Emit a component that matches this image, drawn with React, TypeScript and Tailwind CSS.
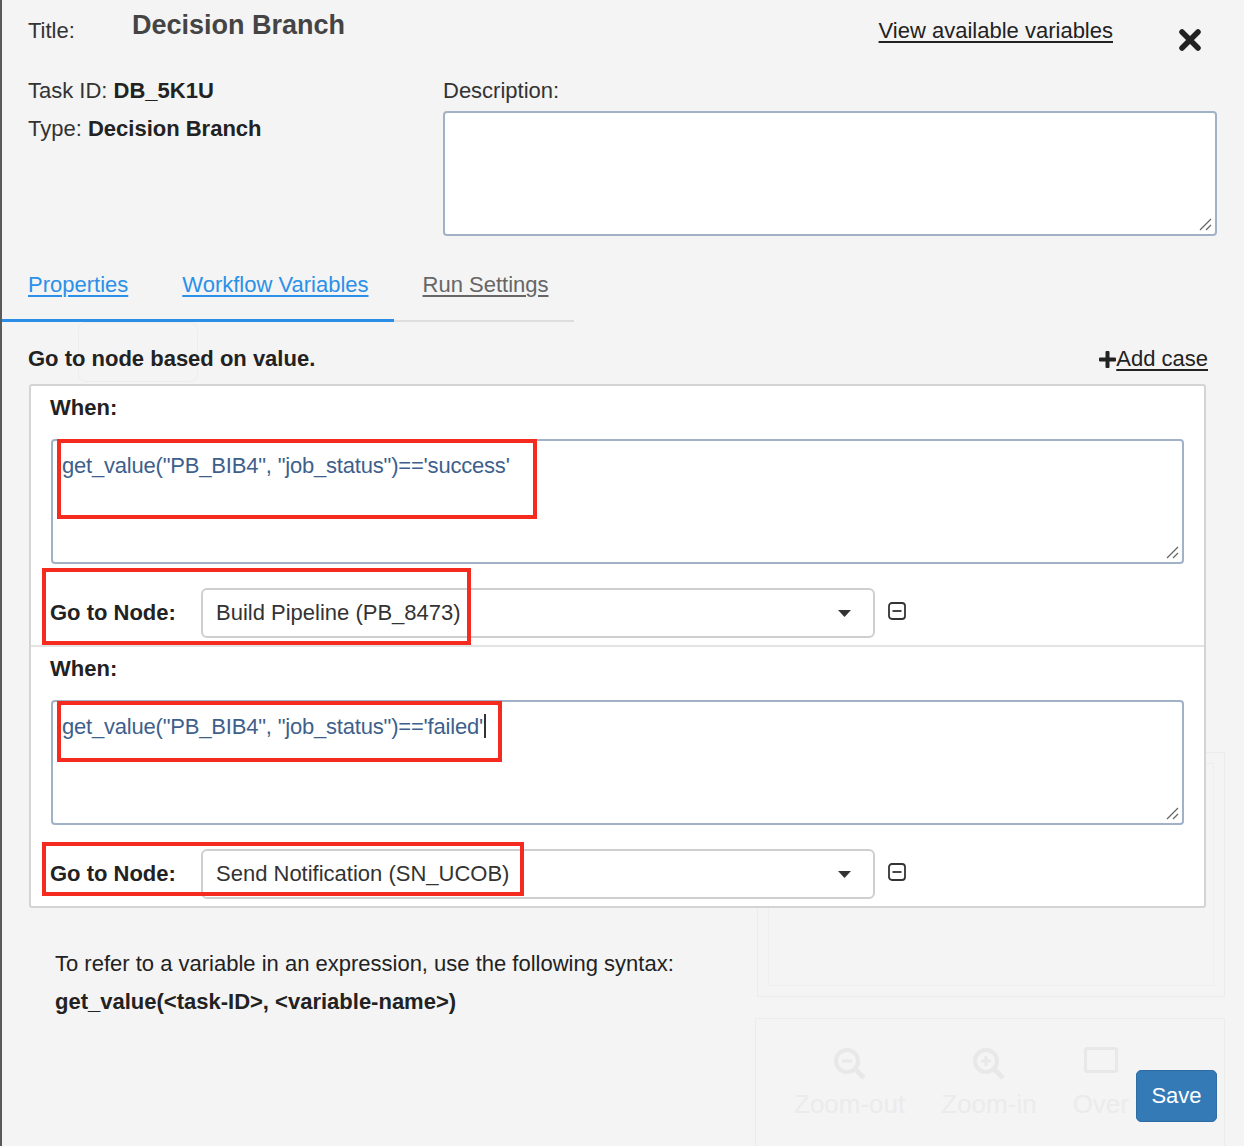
import React from "react";

const ResizeGrip = () => (
  <svg className="absolute bottom-[3px] right-[3px]" width="14" height="14" viewBox="0 0 14 14">
    <line x1="2" y1="13" x2="13" y2="2" stroke="#666" strokeWidth="1.3" />
    <line x1="8" y1="13" x2="13" y2="8" stroke="#666" strokeWidth="1.3" />
  </svg>
);

const Caret = () => (
  <svg width="13" height="7" viewBox="0 0 13 7">
    <path d="M0 0 H13 L6.5 7 Z" fill="#333" />
  </svg>
);

const MinusSquare = () => (
  <svg width="18" height="18" viewBox="0 0 18 18">
    <rect x="1" y="1" width="16" height="16" rx="3" fill="none" stroke="#333" strokeWidth="1.8" />
    <line x1="4.5" y1="9" x2="13.5" y2="9" stroke="#333" strokeWidth="1.8" />
  </svg>
);

// red highlight frames drawn over the form fields
const Mark = ({ className }: { className: string }) => (
  <div className={`pointer-events-none absolute border-[4px] border-[#f62b1f] ${className}`} />
);

interface CaseProps {
  expr: string;
  node: string;
  cursor?: boolean;
  divider?: boolean;
  exprMark: string;
  nodeMark: string;
}

const CaseRow = ({ expr, node, cursor, divider, exprMark, nodeMark }: CaseProps) => (
  <div className={`px-[20px] pt-[9px] pb-[7px] ${divider ? "border-b-2 border-[#e3e3e3]" : ""}`}>
    <p className="-ml-px font-bold text-[#222]">When:</p>
    <div className="relative mt-[18px] h-[125px] rounded-[4px] border-2 border-[#a2b2c6] bg-white px-[9px] pt-[12px] text-[#3e5f8c]">
      <span className="tracking-[-0.2px]">{expr}</span>
      {cursor && <span className="ml-px inline-block h-[24px] w-[2px] align-top bg-[#333]" />}
      <ResizeGrip />
      <Mark className={exprMark} />
    </div>
    <div className="relative mt-[24px] flex items-center">
      <span className="-ml-px w-[151px] font-bold text-[#222]">Go to Node:</span>
      <div className="flex h-[50px] w-[674px] items-center justify-between rounded-[6px] border-2 border-[#cfcfcf] bg-white pl-[13px] pr-[22px] text-[#333]">
        <span>{node}</span>
        <Caret />
      </div>
      <span className="ml-[13px] mt-[-4px]">
        <MinusSquare />
      </span>
      <Mark className={nodeMark} />
    </div>
  </div>
);

// faint canvas that shows through the panel behind the form
const Backdrop = () => (
  <div className="pointer-events-none absolute inset-0 z-0 text-[#ebebeb]">
    <div className="absolute left-[76px] top-[322px] h-[60px] w-[120px] rounded-[8px] border border-[#ededed]" />
    <div className="absolute left-[755px] top-[752px] h-[245px] w-[468px] border border-[#ececec]">
      <div className="ml-[10px] mt-[10px] h-[223px] w-[446px] border border-[#eeeeee]" />
    </div>
    <div className="absolute left-[753px] top-[1018px] h-[140px] w-[470px] border border-[#ececec]">
      <div className="flex gap-[36px] pl-[38px] pt-[28px] text-[26px]">
        <div className="flex flex-col items-center">
          <svg width="34" height="34" viewBox="0 0 34 34">
            <circle cx="14" cy="14" r="11" fill="none" stroke="#e8e8e8" strokeWidth="4" />
            <line x1="22" y1="22" x2="31" y2="31" stroke="#e8e8e8" strokeWidth="5" />
            <line x1="9" y1="14" x2="19" y2="14" stroke="#e8e8e8" strokeWidth="3" />
          </svg>
          <span className="mt-[10px]">Zoom-out</span>
        </div>
        <div className="flex flex-col items-center">
          <svg width="34" height="34" viewBox="0 0 34 34">
            <circle cx="14" cy="14" r="11" fill="none" stroke="#e8e8e8" strokeWidth="4" />
            <line x1="22" y1="22" x2="31" y2="31" stroke="#e8e8e8" strokeWidth="5" />
            <line x1="9" y1="14" x2="19" y2="14" stroke="#e8e8e8" strokeWidth="3" />
            <line x1="14" y1="9" x2="14" y2="19" stroke="#e8e8e8" strokeWidth="3" />
          </svg>
          <span className="mt-[10px]">Zoom-in</span>
        </div>
        <div className="flex flex-col items-center">
          <div className="h-[26px] w-[34px] rounded-[3px] border-[3px] border-[#e8e8e8]" />
          <span className="mt-[18px]">Over</span>
        </div>
      </div>
    </div>
  </div>
);

export default function App() {
  return (
    <div className="relative h-[1146px] w-[1244px] overflow-hidden border-l-2 border-[#5a5a5a] bg-[#f4f4f4] font-['Liberation_Sans',Arial,sans-serif] text-[22px] leading-[26px] text-[#333]">
      <Backdrop />

      <div className="relative z-10">
        {/* title bar */}
        <div className="flex h-[78px] items-start pl-[26px] pr-[43px]">
          <span className="mt-[18px] w-[104px]">Title:</span>
          <h1 className="mt-[9px] text-[27px] font-bold leading-[32px] text-[#444]">Decision Branch</h1>
          <a className="ml-auto mt-[18px] text-[#222] underline underline-offset-[3px]">View available variables</a>
          <button className="ml-[66px] mt-[29px]">
            <svg width="22" height="22" viewBox="0 0 22 22">
              <path d="M3 3 L19 19 M19 3 L3 19" stroke="#222" strokeWidth="5.5" strokeLinecap="round" />
            </svg>
          </button>
        </div>

        {/* task info + description */}
        <div className="flex pl-[26px] pr-[27px]">
          <div className="w-[415px]">
            <p>
              Task ID: <b className="text-[#222]">DB_5K1U</b>
            </p>
            <p className="mt-[12px]">
              Type: <b className="text-[#222]">Decision Branch</b>
            </p>
          </div>
          <div className="flex-1">
            <p>Description:</p>
            <div className="relative mt-[7px] h-[125px] rounded-[4px] border-2 border-[#a2b2c6] bg-white">
              <ResizeGrip />
            </div>
          </div>
        </div>

        {/* tabs */}
        <div className="mt-[36px] w-[572px]">
          <div className="flex gap-[54px] pl-[26px]">
            <a className="text-[#2b90e8] underline underline-offset-[3px]">Properties</a>
            <a className="text-[#2b90e8] underline underline-offset-[3px]">Workflow Variables</a>
            <a className="text-[#666] underline underline-offset-[3px]">Run Settings</a>
          </div>
          <div className="mt-[21px] flex items-end">
            <div className="h-[3px] w-[392px] bg-[#2a8ee6]" />
            <div className="h-[2px] flex-1 bg-[#dedede]" />
          </div>
        </div>

        <div className="mt-[24px] flex items-center justify-between pl-[26px] pr-[36px]">
          <p className="font-bold text-[#222]">Go to node based on value.</p>
          <a className="flex items-center text-[#222]">
            <svg width="17" height="17" viewBox="0 0 17 17">
              <rect x="6.5" y="0" width="4" height="17" rx="1" fill="#222" />
              <rect x="0" y="6.5" width="17" height="4" rx="1" fill="#222" />
            </svg>
            <span className="underline underline-offset-[3px]">Add case</span>
          </a>
        </div>

        {/* cases */}
        <div className="ml-[27px] mr-[38px] mt-[12px] rounded-[3px] border-2 border-[#d4d4d4] bg-white">
          <CaseRow
            divider
            expr={`get_value("PB_BIB4", "job_status")=='success'`}
            node="Build Pipeline (PB_8473)"
            exprMark="left-[4px] -top-[2px] h-[80px] w-[480px]"
            nodeMark="-left-[9px] -top-[20px] h-[77px] w-[429px]"
          />
          <CaseRow
            cursor
            expr={`get_value("PB_BIB4", "job_status")=='failed'`}
            node="Send Notification (SN_UCOB)"
            exprMark="left-[4px] -top-[1px] h-[61px] w-[445px]"
            nodeMark="-left-[9px] -top-[7px] h-[54px] w-[482px]"
          />
        </div>

        <div className="mt-[43px] pl-[53px] text-[#222]">
          <p>To refer to a variable in an expression, use the following syntax:</p>
          <p className="mt-[12px] font-bold">get_value(&lt;task-ID&gt;, &lt;variable-name&gt;)</p>
        </div>

        <div className="mt-[55px] flex justify-end pr-[27px]">
          <button className="h-[52px] w-[81px] rounded-[5px] border border-[#2e6da4] bg-[#337ab7] text-white">
            Save
          </button>
        </div>
      </div>
    </div>
  );
}
